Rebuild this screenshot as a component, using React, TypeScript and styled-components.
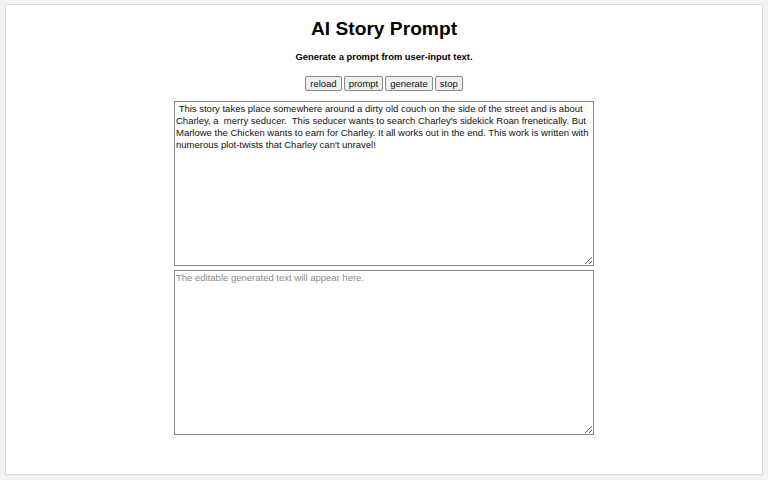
import React, { useState } from "react";
import styled, { createGlobalStyle } from "styled-components";

const GlobalStyle = createGlobalStyle`
  html, body {
    margin: 0;
    padding: 0;
    background: #f3f3f3;
    font-family: "Liberation Sans", Arial, sans-serif;
  }
`;

const STORY =
  " This story takes place somewhere around a dirty old couch on the side of the street and is about Charley, a  merry seducer.  This seducer wants to search Charley's sidekick Roan frenetically. But Marlowe the Chicken wants to earn for Charley. It all works out in the end. This work is written with numerous plot-twists that Charley can't unravel!";

const App = () => {
  const [story, setStory] = useState(STORY);
  const [generated, setGenerated] = useState("");

  return (
    <Page>
      <GlobalStyle />
      <Panel>
        <Title>AI Story Prompt</Title>
        <Subtitle>Generate a prompt from user-input text.</Subtitle>
        <ButtonRow>
          <ActionButton>reload</ActionButton>
          <ActionButton>prompt</ActionButton>
          <ActionButton>generate</ActionButton>
          <ActionButton>stop</ActionButton>
        </ButtonRow>
        <TextBox value={story} onChange={(e) => setStory(e.target.value)} />
        <TextBox
          value={generated}
          placeholder="The editable generated text will appear here."
          onChange={(e) => setGenerated(e.target.value)}
        />
      </Panel>
    </Page>
  );
};

const Page = styled.div`
  box-sizing: border-box;
  height: 480px;
  padding: 4px 5px 5px 5px;
`;
const Panel = styled.div`
  box-sizing: border-box;
  height: 100%;
  background: #fff;
  border: 1px solid #dcdcdc;
  display: flex;
  flex-direction: column;
  align-items: center;
`;
const Title = styled.h1`
  margin: 13px 0 0;
  font-size: 19.2px;
  line-height: 22px;
  font-weight: bold;
  color: #000;
`;
const Subtitle = styled.p`
  margin: 11px 0 0;
  font-size: 9.4px;
  line-height: 12px;
  font-weight: bold;
  color: #000;
`;
const ButtonRow = styled.div`
  display: flex;
  gap: 2px;
  margin-top: 13px;
  margin-bottom: 10px;
`;
const ActionButton = styled.button`
  font-family: "Liberation Sans", Arial, sans-serif;
  font-size: 9.5px;
  line-height: 11px;
  padding: 1px 4px;
  height: 15px;
  background: #efefef;
  border: 1px solid #8a8a8a;
  border-radius: 2px;
  color: #111;
`;
const TextBox = styled.textarea`
  box-sizing: border-box;
  width: 420px;
  height: 165px;
  margin: 0 0 4px;
  padding: 1px 1px;
  font-family: "Liberation Sans", Arial, sans-serif;
  font-size: 9.5px;
  line-height: 12px;
  color: #111;
  border: 1px solid #888;
  border-radius: 0;
  resize: both;
  &::placeholder {
    color: #8a8a8a;
  }
`;

export default App;
